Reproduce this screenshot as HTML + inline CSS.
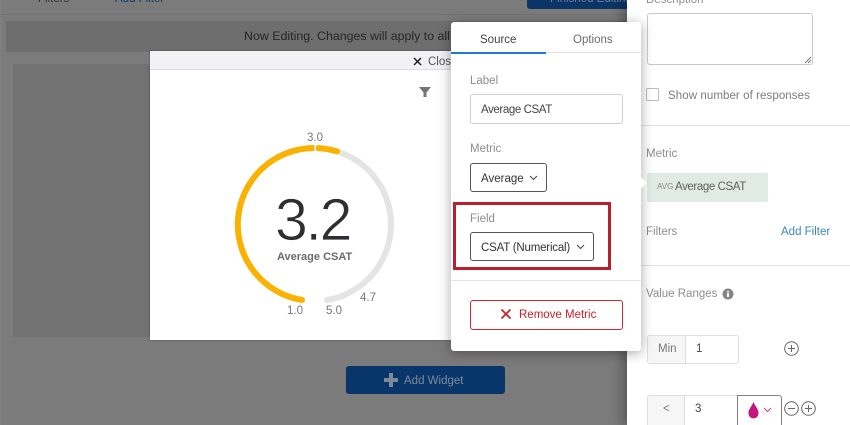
<!DOCTYPE html>
<html>
<head>
<meta charset="utf-8">
<style>
html,body{margin:0;padding:0;overflow:hidden;width:850px;height:425px;}
body{background:#7b7b7b;font-family:"Liberation Sans",sans-serif;font-size:11.5px;}
#w{position:absolute;left:0;top:0;width:850px;height:425px;overflow:hidden;background:#7b7b7b;}
#w div,#w span{position:absolute;box-sizing:border-box;white-space:nowrap;}
.t{line-height:16px;font-size:11.5px;}
.lab{color:#8e8e8e;}
.c{letter-spacing:-.4px;}
</style>
</head>
<body>
<div id="w">
<!-- background -->
<div style="left:0;top:0;width:2px;height:425px;background:#808080"></div>
<div style="left:0;top:14px;width:640px;height:1px;background:#727272"></div>
<div class="t" style="left:38px;top:-9px;color:#333">Filters</div>
<div class="t" style="left:115px;top:-9px;color:#123a66">Add Filter</div>
<div style="left:527px;top:-10px;width:110px;height:19px;background:#0a3566;border-radius:3px"></div>
<div class="t" style="left:550px;top:-9px;color:#6d7f95">Finished Editing</div>
<div style="left:6px;top:21px;width:640px;height:31px;background:#6e6e6e"></div>
<div class="t" style="left:244px;top:28px;color:#262626;font-size:12.4px">Now Editing. Changes will apply to all</div>
<div style="left:13px;top:64px;width:620px;height:273px;background:#727272"></div>
<!-- add widget -->
<div style="left:346px;top:366px;width:159px;height:28px;background:#08356a;border-radius:3px"></div>
<svg style="position:absolute;left:384px;top:373px" width="14" height="14"><path d="M5 0h4v5h5v4H9v5H5V9H0V5h5z" fill="#7d8a9b"/></svg>
<div class="t" style="left:404px;top:373px;color:#7d8a9b">Add Widget</div>
<!-- modal -->
<div style="left:150px;top:51px;width:340px;height:289px;background:#fff;box-shadow:0 0 2px rgba(0,0,0,.4)"></div>
<div style="left:150px;top:51px;width:340px;height:19px;background:#f2f2f6;border-bottom:1px solid #dcdcdf"></div>
<svg style="position:absolute;left:412px;top:56px" width="11" height="11"><path d="M2 2l7 7M9 2l-7 7" stroke="#222" stroke-width="1.500"/></svg>
<div class="t" style="left:428px;top:54px;color:#555;font-size:11.5px">Close</div>
<svg style="position:absolute;left:419px;top:86px" width="12" height="12"><path d="M0 1h12L7.500 6.500V11h-3V6.500z" fill="#757575"/></svg>
<!-- gauge -->
<svg style="position:absolute;left:0;top:0" width="850" height="425">
<path d="M338 151.700A76.500 76.500 0 0 1 356.500 288.400" fill="none" stroke="#e4e4e4" stroke-width="6"/>
<path d="M355 289.400A76.500 76.500 0 0 1 327 300" fill="none" stroke="#e4e4e4" stroke-width="6" stroke-linecap="round"/>
<path d="M302 300A76.500 76.500 0 0 1 314 148" fill="none" stroke="#fbb100" stroke-width="6" stroke-linecap="round"/>
<path d="M318 148.100A76.500 76.500 0 0 1 337 151.400" fill="none" stroke="#fbb100" stroke-width="6" stroke-linecap="round"/>
<rect x="315" y="144" width="1" height="8" fill="#fbb100"/>
<rect x="314.500" y="143" width="1.500" height="11" fill="#fff"/>
</svg>
<div class="t" style="left:307px;top:130px;color:#777">3.0</div>
<div class="t" style="left:360px;top:290px;color:#777">4.7</div>
<div class="t" style="left:287px;top:303px;color:#777">1.0</div>
<div class="t" style="left:326px;top:303px;color:#777">5.0</div>
<div style="left:275px;top:185px;font-size:59px;line-height:70px;color:#2f2f33;letter-spacing:-2.3px;-webkit-text-stroke:.8px #fff">3.2</div>
<div style="left:277px;top:249px;font-size:11px;line-height:16px;color:#6b6b6b;font-weight:700">Average CSAT</div>
<!-- right panel -->
<div style="left:627px;top:0;width:223px;height:425px;background:#fff;box-shadow:-6px 0 10px rgba(0,0,0,.25)"></div>
<div class="t lab" style="left:646px;top:-8px">Description</div>
<div style="left:647px;top:13px;width:166px;height:52px;border:1px solid #c9c9c9;border-radius:3px;background:#fff"></div>
<svg style="position:absolute;left:804px;top:56px" width="8" height="8"><path d="M1 7l6-6M4 7l3-3" stroke="#777" stroke-width="1"/></svg>
<div style="left:646px;top:88px;width:13px;height:13px;border:1px solid #bcbcbc;border-radius:1px"></div>
<div class="t" style="left:668px;top:88px;color:#7c7c7c;letter-spacing:.08px">Show number of responses</div>
<div style="left:627px;top:125px;width:223px;height:1px;background:#e2e2e2"></div>
<div class="t lab" style="left:646px;top:146px">Metric</div>
<div style="left:647px;top:173px;width:121px;height:29px;background:#e0ebe5;border-radius:2px"></div>
<div style="left:657px;top:180px;font-size:8px;line-height:14px;color:#8a8a8a">AVG</div>
<div class="t c" style="left:675px;top:179px;color:#5f5f5f">Average CSAT</div>
<div class="t lab" style="left:646px;top:224px">Filters</div>
<div class="t" style="left:781px;top:224px;color:#3f86c6">Add Filter</div>
<div style="left:627px;top:265px;width:223px;height:1px;background:#e2e2e2"></div>
<div class="t lab" style="left:646px;top:286px">Value Ranges</div>
<svg style="position:absolute;left:722px;top:288px" width="12" height="12"><circle cx="6" cy="6" r="5.500" fill="#858585"/><rect x="5" y="5" width="2" height="4" fill="#fff"/><rect x="5" y="3" width="2" height="1.300" fill="#fff"/></svg>
<div style="left:647px;top:335px;width:92px;height:29px;border:1px solid #dedede;border-radius:3px;background:#fff"></div>
<div style="left:648px;top:336px;width:38px;height:27px;background:#f6f6f6;border-right:1px solid #dedede"></div>
<div class="t" style="left:658px;top:341px;color:#777">Min</div>
<div class="t" style="left:696px;top:341px;color:#444">1</div>
<svg style="position:absolute;left:783px;top:340px" width="17" height="17"><circle cx="8.500" cy="8.500" r="6.800" fill="none" stroke="#666"/><path d="M5 8.500h7M8.500 5v7" stroke="#666"/></svg>
<div style="left:647px;top:395px;width:92px;height:40px;border:1px solid #dedede;border-radius:3px;background:#fff"></div>
<div style="left:648px;top:396px;width:37px;height:40px;background:#f6f6f6;border-right:1px solid #dedede"></div>
<div class="t" style="left:663px;top:401px;color:#777">&lt;</div>
<div class="t" style="left:695px;top:401px;color:#444">3</div>
<div style="left:737px;top:395px;width:45px;height:40px;border:1px solid #7f7f7f;border-radius:0 3px 3px 0;background:#fff"></div>
<svg style="position:absolute;left:747px;top:402px" width="13" height="17"><path d="M6.500 0C8 4 12 7.500 11.500 11.500a5 5 0 0 1-10 0C1 7.500 5 4 6.500 0z" fill="#c2177d"/></svg>
<svg style="position:absolute;left:763px;top:407px" width="9" height="6"><path d="M1 1l3.500 3.500L8 1" fill="none" stroke="#d03a90"/></svg>
<svg style="position:absolute;left:783px;top:400px" width="17" height="17"><circle cx="8.500" cy="8.500" r="6.800" fill="none" stroke="#666"/><path d="M5 8.500h7" stroke="#666"/></svg>
<svg style="position:absolute;left:800px;top:400px" width="17" height="17"><circle cx="8.500" cy="8.500" r="6.800" fill="none" stroke="#666"/><path d="M5 8.500h7M8.500 5v7" stroke="#666"/></svg>
<!-- popover -->
<div style="left:451px;top:22px;width:190px;height:329px;background:#fff;border-radius:3px;box-shadow:0 2px 12px rgba(0,0,0,.35)"></div>
<div style="left:637px;top:179px;width:8px;height:8px;background:#fff;transform:rotate(45deg)"></div>
<div style="left:451px;top:52px;width:190px;height:1px;background:#e3e3e3"></div>
<div style="left:451px;top:52px;width:95px;height:2px;background:#1f7ad6"></div>
<div class="t" style="left:480px;top:32px;color:#444">Source</div>
<div class="t" style="left:573px;top:32px;color:#6d6d6d">Options</div>
<div class="t lab" style="left:470px;top:73px">Label</div>
<div style="left:470px;top:94px;width:153px;height:30px;border:1px solid #cfcfcf;border-radius:3px"></div>
<div class="t c" style="left:481px;top:102px;color:#444">Average CSAT</div>
<div class="t lab" style="left:470px;top:141px">Metric</div>
<div style="left:470px;top:163px;width:77px;height:29px;border:1px solid #555;border-radius:3px"></div>
<div class="t" style="left:481px;top:171px;color:#333">Average</div>
<svg style="position:absolute;left:529px;top:175px" width="9" height="6"><path d="M1 1l3.500 3.500L8 1" fill="none" stroke="#444"/></svg>
<div style="left:453px;top:202px;width:158px;height:68px;border:3px solid #b81f2f"></div>
<div class="t lab" style="left:470px;top:211px">Field</div>
<div style="left:470px;top:232px;width:124px;height:29px;border:1px solid #555;border-radius:3px"></div>
<div class="t" style="left:481px;top:240px;color:#333;letter-spacing:-.2px">CSAT (Numerical)</div>
<svg style="position:absolute;left:576px;top:244px" width="9" height="6"><path d="M1 1l3.500 3.500L8 1" fill="none" stroke="#444"/></svg>
<div style="left:451px;top:280px;width:190px;height:1px;background:#e3e3e3"></div>
<div style="left:470px;top:300px;width:153px;height:30px;border:1px solid #d9252e;border-radius:3px"></div>
<svg style="position:absolute;left:500px;top:308px" width="12" height="12"><path d="M1.500 1.500l9 9M10.500 1.500l-9 9" stroke="#c9202b" stroke-width="1.700"/></svg>
<div class="t" style="left:519px;top:307px;color:#c9202b">Remove Metric</div>
</div>
</body>
</html>
